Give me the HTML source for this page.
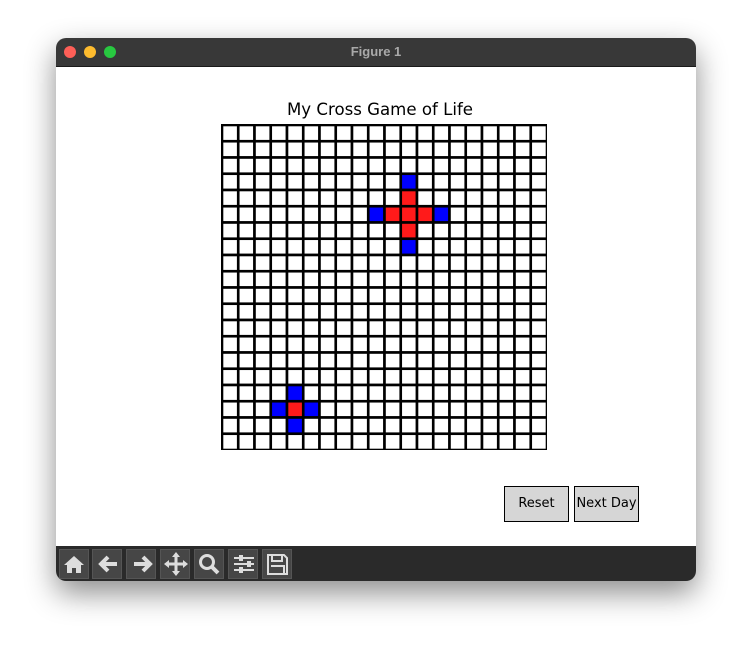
<!DOCTYPE html>
<html><head><style>
body{margin:0;width:752px;height:656px;background:#fff;position:relative;font-family:"Liberation Sans","DejaVu Sans",sans-serif;overflow:hidden}
.win{position:absolute;left:56px;top:38px;width:640px;height:543px;border-radius:10px;overflow:hidden;box-shadow:0 12px 30px rgba(0,0,0,.45);background:#fff}
.tb{position:absolute;left:0;top:0;width:640px;height:28px;background:#383838;border-bottom:1px solid #1a1a1a}
.tb span{position:absolute;width:100%;text-align:center;top:6px;color:#a9a9a9;font-size:13px;font-weight:bold}
.dot{position:absolute;top:8px;width:12px;height:12px;border-radius:50%}
.title{position:absolute;left:4px;width:640px;top:62px;text-align:center;font-family:"DejaVu Sans",sans-serif;font-size:16.6px;color:#000}
.btn{position:absolute;top:448px;height:34px;background:#d6d6d6;border:1px solid #000;font-family:"DejaVu Sans",sans-serif;font-size:13px;text-align:center;line-height:34px}
.bar{position:absolute;left:0;top:508px;width:640px;height:35px;background:#2a2a2a}
.ic{position:absolute;top:3px;width:30px;height:30px;background:#464646;border:1px solid #555;box-sizing:border-box}
</style></head><body>
<div class="win">
<div class="tb"><div class="dot" style="left:8px;background:#fe5f57"></div><div class="dot" style="left:28px;background:#febc2e"></div><div class="dot" style="left:48px;background:#28c840"></div><span>Figure 1</span></div>
<div class="title">My Cross Game of Life</div>
<svg style="position:absolute;left:165px;top:86px" width="326" height="326" viewBox="0 0 326 326">
<g stroke="#000" stroke-width="2.6" fill="#fff" id="g"></g>
</svg>
<div class="btn" style="left:448px;width:63px">Reset</div>
<div class="btn" style="left:518px;width:63px">Next Day</div>
<div class="bar">
<div class="ic" style="left:3px"></div><div class="ic" style="left:36px"></div><div class="ic" style="left:70px"></div><div class="ic" style="left:104px"></div><div class="ic" style="left:138px"></div><div class="ic" style="left:172px"></div><div class="ic" style="left:206px"></div>
<svg style="position:absolute;left:0;top:0" width="240" height="35" fill="#ddd" stroke="#ddd">
<path d="M8 19 L18 10 L28 19 L25 19 L25 27 L20 27 L20 22 L16 22 L16 27 L11 27 L11 19Z" stroke="none"/>
<path d="M61 18 H45 M52 11 L45 18 L52 25" stroke-width="4" fill="none"/>
<path d="M78 18 H94 M87 11 L94 18 L87 25" stroke-width="4" fill="none"/>
<path d="M120 8 V28 M110 18 H130" stroke-width="3" fill="none"/><path d="M120 6 l-4 5 h8z M120 30 l-4 -5 h8z M108 18 l5 -4 v8z M132 18 l-5 -4 v8z" stroke="none"/>
<circle cx="151" cy="16" r="6.5" fill="none" stroke-width="3"/><path d="M156 21 L162 27" stroke-width="4"/>
<path d="M178 12 H198 M178 18 H198 M178 24 H198" stroke-width="2"/><rect x="183" y="9" width="4" height="6" stroke="none"/><rect x="191" y="15" width="4" height="6" stroke="none"/><rect x="183" y="21" width="4" height="6" stroke="none"/>
<path d="M212 9 H228 L231 12 V28 H212Z M216 9 V15 H226 V9 M215 20 H228 V28" fill="none" stroke-width="2"/>
</svg>
</div>
</div>
<script>
var g=document.getElementById('g'),s=16.25,h='';
var col={};
[[3,11],[7,11],[5,9],[5,13],[16,4],[18,4],[17,3],[17,5]].forEach(function(p){col[p[0]+','+p[1]]='#0000ff'});
[[4,11],[6,11],[5,10],[5,11],[5,12],[17,4]].forEach(function(p){col[p[0]+','+p[1]]='#ff1a1a'});
for(var r=0;r<20;r++)for(var c=0;c<20;c++){h+='<rect x="'+(1+c*s)+'" y="'+(1+r*s)+'" width="'+s+'" height="'+s+'" fill="'+(col[r+','+c]||'#fff')+'"/>';}
g.innerHTML=h;
</script>
</body></html>
